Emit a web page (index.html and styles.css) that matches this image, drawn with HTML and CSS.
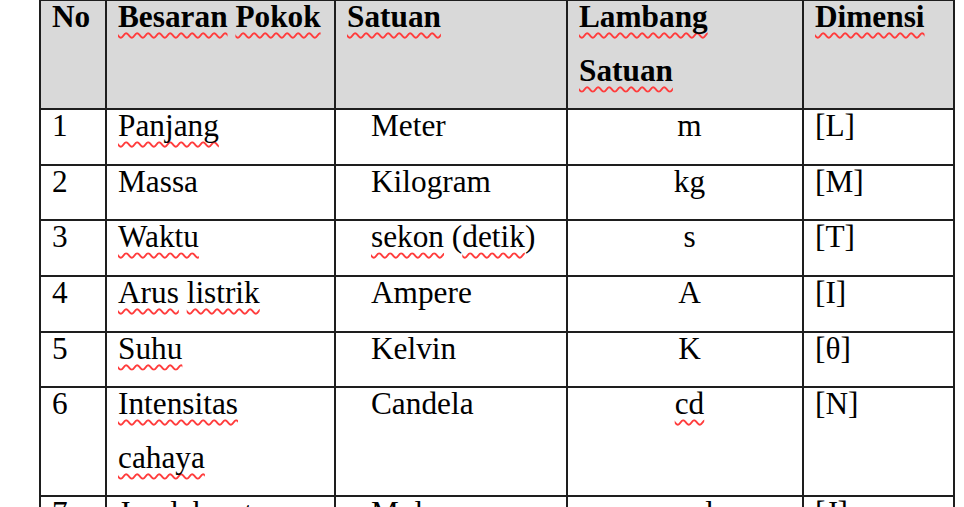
FILE: index.html
```html
<!DOCTYPE html>
<html>
<head>
<meta charset="utf-8">
<link rel="stylesheet" href="styles.css">
</head>
<body>
<table class="tbl">
  <colgroup>
    <col class="c-no"><col class="c-bp"><col class="c-sat"><col class="c-lam"><col class="c-dim">
  </colgroup>
  <thead>
    <tr class="head">
      <th><div class="tx">No</div></th>
      <th><div class="tx"><span class="sp">Besaran</span> <span class="sp">Pokok</span></div></th>
      <th><div class="tx"><span class="sp">Satuan</span></div></th>
      <th><div class="tx"><span class="sp">Lambang</span><br><span class="sp">Satuan</span></div></th>
      <th><div class="tx"><span class="sp">Dimensi</span></div></th>
    </tr>
  </thead>
  <tbody>
    <tr>
      <td><div class="tx">1</div></td>
      <td><div class="tx"><span class="sp">Panjang</span></div></td>
      <td class="sat"><div class="tx">Meter</div></td>
      <td class="lam"><div class="tx">m</div></td>
      <td><div class="tx">[L]</div></td>
    </tr>
    <tr>
      <td><div class="tx">2</div></td>
      <td><div class="tx">Massa</div></td>
      <td class="sat"><div class="tx">Kilogram</div></td>
      <td class="lam"><div class="tx">kg</div></td>
      <td><div class="tx">[M]</div></td>
    </tr>
    <tr>
      <td><div class="tx">3</div></td>
      <td><div class="tx"><span class="sp">Waktu</span></div></td>
      <td class="sat"><div class="tx"><span class="sp">sekon</span> (<span class="sp">detik</span>)</div></td>
      <td class="lam"><div class="tx">s</div></td>
      <td><div class="tx">[T]</div></td>
    </tr>
    <tr>
      <td><div class="tx">4</div></td>
      <td><div class="tx"><span class="sp">Arus</span> <span class="sp">listrik</span></div></td>
      <td class="sat"><div class="tx">Ampere</div></td>
      <td class="lam"><div class="tx">A</div></td>
      <td><div class="tx">[I]</div></td>
    </tr>
    <tr>
      <td><div class="tx">5</div></td>
      <td><div class="tx"><span class="sp">Suhu</span></div></td>
      <td class="sat"><div class="tx">Kelvin</div></td>
      <td class="lam"><div class="tx">K</div></td>
      <td><div class="tx">[θ]</div></td>
    </tr>
    <tr>
      <td><div class="tx">6</div></td>
      <td><div class="tx"><span class="sp">Intensitas</span><br><span class="sp">cahaya</span></div></td>
      <td class="sat"><div class="tx">Candela</div></td>
      <td class="lam"><div class="tx"><span class="sp">cd</span></div></td>
      <td><div class="tx">[N]</div></td>
    </tr>
    <tr>
      <td><div class="tx">7</div></td>
      <td><div class="tx"><span class="sp">Jumlah</span> <span class="sp">zat</span></div></td>
      <td class="sat"><div class="tx">Mol</div></td>
      <td class="lam"><div class="tx">mol</div></td>
      <td><div class="tx">[J]</div></td>
    </tr>
  </tbody>
</table>
</body>
</html>
```
FILE: styles.css
```css
html, body {
  margin: 0;
  padding: 0;
  background: #ffffff;
}

body {
  font-family: "Liberation Serif", "Times New Roman", serif;
  font-size: 31.3px;
  color: #000000;
  height: 507px;
  overflow: hidden;
}

.tbl {
  border-collapse: collapse;
  table-layout: fixed;
  width: 916px;
  margin: -1px 0 0 39px;
}

.c-no { width: 66px; }
.c-bp { width: 229px; }
.c-sat { width: 232px; }
.c-lam { width: 236px; }

.tbl th,
.tbl td {
  border: 2px solid #1e1e1e;
  padding: 0 4px 0 11px;
  line-height: 53.6px;
  vertical-align: top;
  text-align: left;
  white-space: nowrap;
  overflow: hidden;
}

.tbl th {
  background: #d9d9d9;
  font-weight: bold;
}

.tx {
  margin-top: -11px;
  margin-bottom: 11px;
}

.tbl td.sat {
  padding-left: 35px;
}

.tbl td.lam {
  text-align: center;
  padding-left: 12px;
  padding-right: 3px;
}

.sp {
  text-decoration: underline wavy #ff3c3c;
  text-decoration-thickness: 1.5px;
  text-underline-offset: 5px;
  text-decoration-skip-ink: none;
}
```
